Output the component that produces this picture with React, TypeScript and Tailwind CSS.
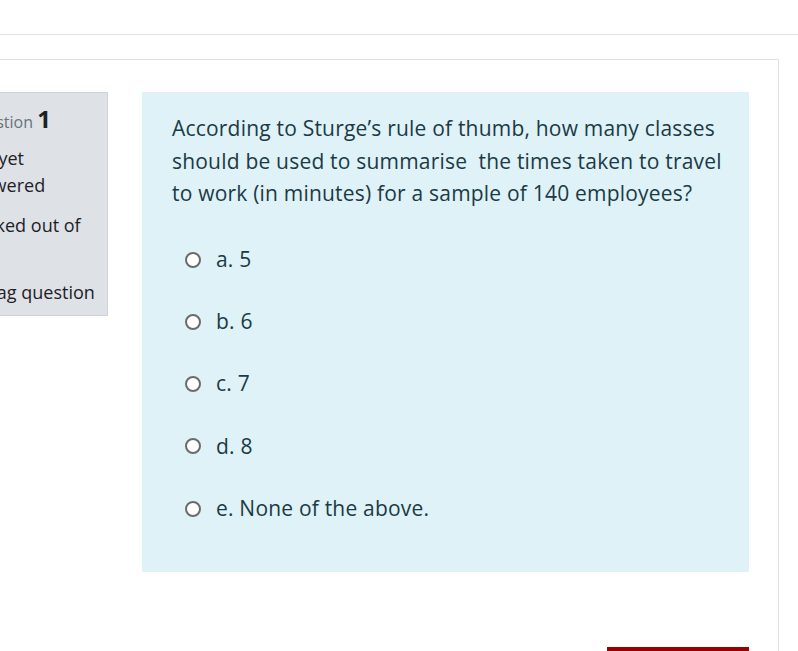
import React from 'react';

const options = ['a. 5', 'b. 6', 'c. 7', 'd. 8', 'e. None of the above.'];

const App = () => {
    return (
        <div className="min-h-screen bg-white font-['Open_Sans','Noto_Sans',sans-serif] overflow-hidden">
            {/* barre du haut */}
            <div className="h-[35px] border-b border-[#dee2e6]" />

            <div className="mt-[24px] ml-[-60px] mr-[19px] border border-[#dee2e6] pt-[32px] pl-[14px] pr-[29px] flex gap-[34px]">
                {/* infos de la question */}
                <div className="w-[153px] shrink-0 self-start bg-[#dee2e6] border border-[#ced4da] pl-[7px] pt-[11px] pb-[9px] text-[18px] leading-[27px] text-[#1d2125] whitespace-nowrap">
                    <h3 className="leading-[30px] text-[#6a737b] text-[16px] pl-[2px]">
                        Question <span className="text-[24px] font-bold text-[#1d2125]">1</span>
                    </h3>
                    <div className="mt-[8px]">Not yet<br />answered</div>
                    <div className="mt-[13px] -ml-[1px]">Marked out of<br />1.00</div>
                    <div className="mt-[13px] flex items-center gap-[4px]">
                        <span className="inline-block w-[16px]" />
                        Flag question
                    </div>
                </div>

                <div className="flex-1 min-w-0 flex flex-col">
                    <div className="bg-[#def2f8] px-[30px] pt-[20px] pb-[32px] text-[#1c3a44]">
                        <p className="text-[21px] tracking-[0.2px] leading-[32.5px] whitespace-nowrap">
                            According to Sturge’s rule of thumb, how many classes<br />
                            should be used to summarise&nbsp; the times taken to travel<br />
                            to work (in minutes) for a sample of 140 employees?
                        </p>
                        <div className="mt-[19px] pl-[13px]">
                            {options.map(o => (
                                <div key={o} className="h-[62.25px] flex items-center gap-[15px] text-[21px] tracking-[0.2px]">
                                    <span className="w-[16px] h-[16px] rounded-full border-2 border-[#6b6b6b] bg-white shrink-0" />
                                    <span>{o}</span>
                                </div>
                            ))}
                        </div>
                    </div>
                    <div className="mt-[75px] flex justify-end">
                        <button className="w-[142px] h-[38px] bg-[#990000] text-white text-[16px]">Next page</button>
                    </div>
                </div>
            </div>
        </div>
    );
};

export default App;
